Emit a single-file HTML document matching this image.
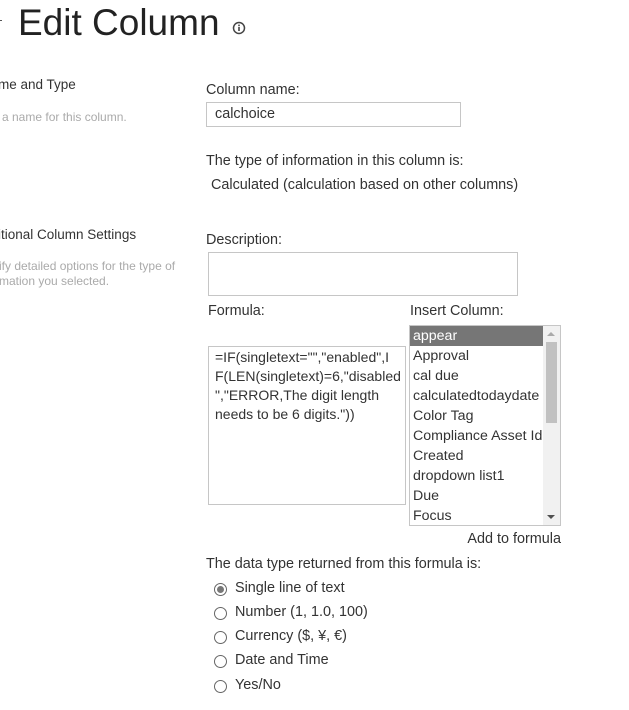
<!DOCTYPE html>
<html><head><meta charset="utf-8"><style>
body{margin:0;width:629px;height:710px;background:#fff;font-family:"Liberation Sans",sans-serif;color:#333;position:relative;overflow:hidden}
.a{position:absolute;white-space:nowrap}
.t{font-size:14.4px}
.g{font-size:12px;color:#aaa}
.box{position:absolute;border:1px solid #c6c6c6;box-sizing:border-box;background:#fff}
.li{height:20px;line-height:20px;padding-left:3px;font-size:14.2px;color:#333}
.r{position:absolute;width:13px;height:13px;border:1px solid #666;border-radius:50%;box-sizing:border-box;left:214px}
</style></head><body>
<div class="a" style="left:-4px;top:20px;width:6px;height:1px;background:#555"></div>
<div class="a" style="left:18px;top:0;font-size:37px;line-height:46px;color:#222">Edit Column</div>
<svg class="a" style="left:232px;top:21px" width="14" height="14" viewBox="0 0 14 14"><circle cx="7" cy="7" r="5.5" fill="none" stroke="#444" stroke-width="1.5"/><rect x="6.2" y="6" width="1.6" height="4" fill="#444"/><rect x="6.2" y="3.6" width="1.6" height="1.6" fill="#444"/></svg>
<div class="a t" style="left:-2px;top:77px;font-size:13.5px">me and Type</div>
<div class="a g" style="left:2px;top:110px">a name for this column.</div>
<div class="a t" style="left:-2px;top:227px;font-size:13.5px">itional Column Settings</div>
<div class="a g" style="left:-1px;top:259px">ify detailed options for the type of</div>
<div class="a g" style="left:-1px;top:274px">mation you selected.</div>

<div class="a t" style="left:206px;top:82px">Column name:</div>
<div class="box" style="left:206px;top:102px;width:255px;height:25px"></div>
<div class="a t" style="left:215px;top:106px">calchoice</div>
<div class="a t" style="left:206px;top:153px">The type of information in this column is:</div>
<div class="a t" style="left:211px;top:177px">Calculated (calculation based on other columns)</div>
<div class="a t" style="left:206px;top:232px">Description:</div>
<div class="box" style="left:208px;top:252px;width:310px;height:44px"></div>
<div class="a t" style="left:208px;top:303px">Formula:</div>
<div class="a t" style="left:410px;top:303px">Insert Column:</div>
<div class="box" style="left:208px;top:346px;width:198px;height:159px"></div>
<div class="a t" style="left:215px;top:348px;line-height:19px;font-size:14px">=IF(singletext="","enabled",I<br>F(LEN(singletext)=6,"disabled<br>","ERROR,The digit length<br>needs to be 6 digits."))</div>
<div class="box" style="left:409px;top:325px;width:152px;height:201px;overflow:hidden">
<div style="position:absolute;left:0;top:0;width:133px">
<div class="li" style="background:#767676;color:#fff">appear</div>
<div class="li">Approval</div><div class="li">cal due</div><div class="li">calculatedtodaydate</div><div class="li">Color Tag</div><div class="li">Compliance Asset Id</div><div class="li">Created</div><div class="li">dropdown list1</div><div class="li">Due</div><div class="li">Focus</div>
</div>
<div style="position:absolute;right:0;top:0;width:17px;height:199px;background:#f1f1f1"></div>
<div style="position:absolute;right:3px;top:16px;width:11px;height:81px;background:#c1c1c1"></div>
<div style="position:absolute;right:5px;top:6px;border:4px solid transparent;border-bottom-color:#aaa;border-top:0"></div>
<div style="position:absolute;right:5px;bottom:6px;border:4px solid transparent;border-top-color:#505050;border-bottom:0"></div>
</div>
<div class="a t" style="right:68px;top:531px">Add to formula</div>
<div class="a t" style="left:206px;top:556px">The data type returned from this formula is:</div>
<div class="r" style="top:583px"><div style="position:absolute;left:2px;top:2px;width:7px;height:7px;border-radius:50%;background:#777"></div></div>
<div class="a t" style="left:235px;top:580px">Single line of text</div>
<div class="r" style="top:607px"></div><div class="a t" style="left:235px;top:604px">Number (1, 1.0, 100)</div>
<div class="r" style="top:631px"></div><div class="a t" style="left:235px;top:628px">Currency ($, ¥, €)</div>
<div class="r" style="top:655px"></div><div class="a t" style="left:235px;top:652px">Date and Time</div>
<div class="r" style="top:680px"></div><div class="a t" style="left:235px;top:677px">Yes/No</div>
</body></html>
